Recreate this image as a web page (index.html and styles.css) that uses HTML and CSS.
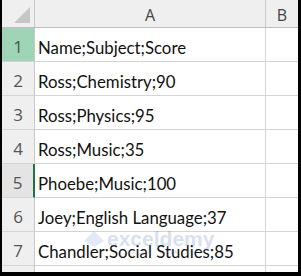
FILE: index.html
```html
<!DOCTYPE html>
<html>
<head>
<meta charset="utf-8">
<link rel="stylesheet" href="styles.css">
</head>
<body>
<div class="frame">
  <div class="sheet">
    <div class="corner"><svg width="16" height="16" viewBox="0 0 16 16"><polygon points="16,0 16,16 0,16" fill="#c6c6c6"/></svg></div>
    <div class="colhead">A</div>
    <div class="colhead last">B</div>

    <div class="rowhead sel">1</div><div class="cell">Name;Subject;Score</div><div class="cell last"></div>
    <div class="rowhead">2</div><div class="cell">Ross;Chemistry;90</div><div class="cell last"></div>
    <div class="rowhead">3</div><div class="cell">Ross;Physics;95</div><div class="cell last"></div>
    <div class="rowhead">4</div><div class="cell">Ross;Music;35</div><div class="cell last"></div>
    <div class="rowhead act">5</div><div class="cell">Phoebe;Music;100</div><div class="cell last"></div>
    <div class="rowhead">6</div><div class="cell">Joey;English Language;37</div><div class="cell last"></div>
    <div class="rowhead">7</div><div class="cell">Chandler;Social Studies;85</div><div class="cell last"></div>

    <div class="rowhead stub"></div><div class="cell stub"></div><div class="cell last stub"></div>
  </div>
  <div class="watermark">
    <svg class="wm-icon" width="24" height="20" viewBox="0 0 24 20"><path d="M2 13 L12 3 L22 13 L12 19 Z" fill="#a9bde0"/></svg>
    <div class="wm-text">
      <div class="wm-name">exceldemy</div>
      <div class="wm-sub">EXCEL · DATA · BI</div>
    </div>
  </div>
</div>
</body>
</html>
```

FILE: styles.css
```css
html, body {
  margin: 0;
  padding: 0;
  background: #000;
}
.frame {
  position: relative;
  width: 296px;
  height: 272px;
  border-left: 2px solid #000;
  border-right: 3px solid #000;
  border-bottom: 4px solid #000;
  background: #fff;
  overflow: hidden;
}
.sheet {
  display: grid;
  grid-template-columns: 33px 231px 32px;
  grid-template-rows: 28px repeat(7, 34px) 6px;
  font-family: "Lato", "Liberation Sans", sans-serif;
}
.corner {
  background: #efefef;
  border-right: 1px solid #c8c8c8;
  border-bottom: 1px solid #bdbdbd;
  display: flex;
  align-items: flex-end;
  justify-content: flex-end;
  padding: 0 4px 4px 0;
}
.colhead {
  background: #efefef;
  border-right: 1px solid #c8c8c8;
  border-bottom: 1px solid #bdbdbd;
  display: flex;
  align-items: center;
  justify-content: center;
  font-family: "Open Sans", sans-serif;
  font-size: 16px;
  color: #444;
  padding-top: 2px;
}
.colhead.last { border-right: none; }
.rowhead {
  background: #efefef;
  border-right: 1px solid #c8c8c8;
  border-bottom: 1px solid #d4d4d4;
  display: flex;
  align-items: center;
  justify-content: center;
  font-family: "Open Sans", sans-serif;
  font-size: 17px;
  color: #555;
  padding-top: 4px;
}
.rowhead.sel {
  background: #9fd5b6;
  color: #3d5a48;
}
.rowhead.act {
  background: #e4e4e4;
  border-right: 2px solid #217346;
}
.cell {
  border-right: 1px solid #d4d4d4;
  border-bottom: 1px solid #d4d4d4;
  display: flex;
  align-items: center;
  padding: 5px 0 0 3px;
  font-size: 16.8px;
  color: #111;
  white-space: nowrap;
}
.cell.last { border-right: none; }
.stub { border-bottom: none; }
.watermark {
  position: absolute;
  left: 80px;
  top: 228px;
  display: flex;
  align-items: flex-start;
  gap: 1px;
  opacity: 0.3;
  pointer-events: none;
}
.wm-text {
  display: flex;
  flex-direction: column;
  align-items: center;
  line-height: 1;
}
.wm-name {
  font-family: "Liberation Sans", sans-serif;
  font-size: 21px;
  font-weight: bold;
  color: #7f9bd0;
}
.wm-sub {
  font-family: "Liberation Sans", sans-serif;
  font-size: 6px;
  color: #8a8a8a;
  letter-spacing: 1px;
}
```
